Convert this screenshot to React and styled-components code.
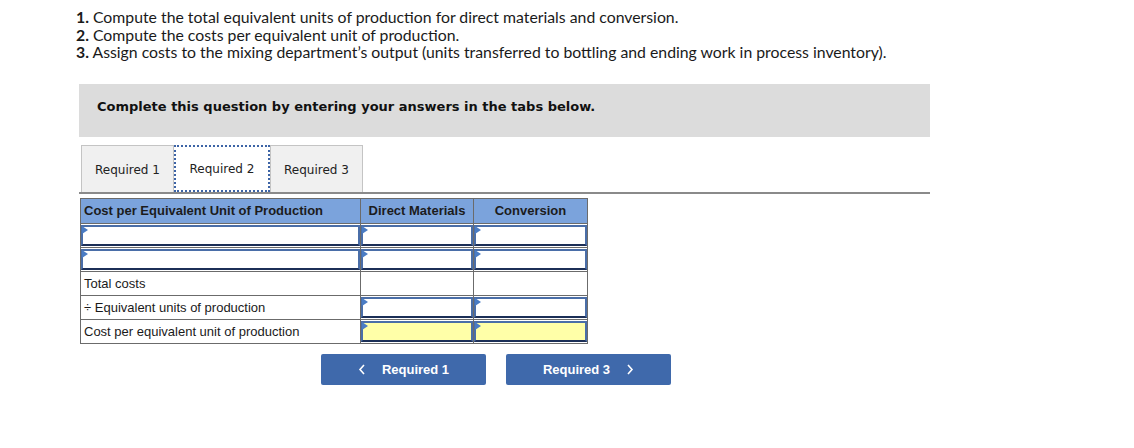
import React from "react";
import styled, { createGlobalStyle } from "styled-components";

const GlobalStyle = createGlobalStyle`
  body {
    margin: 0;
    background: #fff;
    color: #111;
    font-family: Lato, "Open Sans", sans-serif;
  }
`;

const Page = styled.div`
  padding: 8px 0 0 76px;
  width: 1134px;
  box-sizing: border-box;
`;

const Steps = styled.ol`
  list-style: none;
  margin: 0;
  padding: 0;
  font-family: Lato, sans-serif;
  font-size: 15.8px;
  line-height: 17.5px;
  color: #1a1a1a;

  b {
    font-weight: 700;
  }
`;

const Panel = styled.div`
  margin-left: 3px;
  width: 851px;
`;

const Banner = styled.div`
  margin-top: 23px;
  height: 53px;
  box-sizing: border-box;
  padding: 15px 18px 13px;
  background: #dcdcdc;
  font-family: "DejaVu Sans", Verdana, sans-serif;
  font-weight: 700;
  font-size: 13px;
  color: #111;
`;

const TabRow = styled.div`
  display: flex;
  margin-top: 8px;
  padding-left: 2px;
  border-bottom: 2px solid #8a8a8a;
`;

const Tab = styled.div`
  width: ${(p) => p.$w}px;
  height: 47px;
  box-sizing: border-box;
  display: flex;
  align-items: center;
  justify-content: center;
  padding-top: 2px;
  font-family: "DejaVu Sans", Verdana, sans-serif;
  font-size: 12px;
  color: #222;
  background: ${(p) => (p.$active ? "#fff" : "#f0f0f0")};
  border: ${(p) => (p.$active ? "2px dotted #3d64a6" : "1px solid #c4c4c4")};
  border-bottom: ${(p) => (p.$active ? "2px dotted #3d64a6" : "none")};
`;

const Table = styled.table`
  margin: 4px 0 0 1px;
  border-collapse: collapse;
  font-family: "Liberation Sans", Arial, sans-serif;
  font-size: 13px;
  color: #1a1a1a;
`;

const Head = styled.th`
  height: 25px;
  box-sizing: border-box;
  padding: 0 3px;
  background: #7ba3dc;
  border: 1px solid #6b6b6b;
  font-weight: 700;
  font-size: 13px;
  text-align: ${(p) => (p.$left ? "left" : "center")};
  width: ${(p) => p.$w}px;
  color: #1c1c1c;
`;

const Cell = styled.td`
  height: 24px;
  box-sizing: border-box;
  padding: 0 3px;
  border: 1px solid #6b6b6b;
  vertical-align: middle;
`;

const InputCell = styled.td`
  height: 24px;
  box-sizing: border-box;
  padding: 0;
  border: 1px solid #6b6b6b;
`;

const Field = styled.div`
  position: relative;
  height: 21px;
  box-sizing: border-box;
  border: 2px solid #4a6ea8;
  border-bottom-color: #1c2f57;
  background: ${(p) => (p.$yellow ? "#ffffa8" : "#fff")};

  &::before {
    content: "";
    position: absolute;
    left: -1px;
    top: -1px;
    border-top: 4px solid transparent;
    border-bottom: 4px solid transparent;
    border-left: 6px solid #4a7cc4;
  }
`;

const Buttons = styled.div`
  display: flex;
  gap: 20px;
  margin: 10px 0 0 242px;
`;

const NavButton = styled.button`
  width: 165px;
  height: 31px;
  border: none;
  border-radius: 2px;
  background: #3f69ab;
  color: #fff;
  font-family: "Liberation Sans", Arial, sans-serif;
  font-weight: 700;
  font-size: 13px;
  display: flex;
  align-items: center;
  justify-content: center;
  gap: 16px;
  padding: 0;
`;

const Chevron = styled.svg`
  width: 8px;
  height: 11px;
`;

const Left = () => (
  <Chevron viewBox="0 0 8 11">
    <path d="M6 1 L2 5.5 L6 10" fill="none" stroke="#fff" strokeWidth="1.6" />
  </Chevron>
);

const Right = () => (
  <Chevron viewBox="0 0 8 11">
    <path d="M2 1 L6 5.5 L2 10" fill="none" stroke="#fff" strokeWidth="1.6" />
  </Chevron>
);

const InputRow = () => (
  <tr>
    <InputCell><Field /></InputCell>
    <InputCell><Field /></InputCell>
    <InputCell><Field /></InputCell>
  </tr>
);

export default function App() {
  return (
    <Page>
      <GlobalStyle />
      <Steps>
        <li><b>1.</b> Compute the total equivalent units of production for direct materials and conversion.</li>
        <li><b>2.</b> Compute the costs per equivalent unit of production.</li>
        <li><b>3.</b> Assign costs to the mixing department’s output (units transferred to bottling and ending work in process inventory).</li>
      </Steps>
      <Panel>
        <Banner>Complete this question by entering your answers in the tabs below.</Banner>
        <TabRow>
          <Tab $w={93}>Required 1</Tab>
          <Tab $w={96} $active>Required 2</Tab>
          <Tab $w={93}>Required 3</Tab>
        </TabRow>
        <Table>
          <thead>
            <tr>
              <Head $left $w={280}>Cost per Equivalent Unit of Production</Head>
              <Head $w={113}>Direct Materials</Head>
              <Head $w={114}>Conversion</Head>
            </tr>
          </thead>
          <tbody>
            <InputRow />
            <InputRow />
            <tr>
              <Cell>Total costs</Cell>
              <Cell />
              <Cell />
            </tr>
            <tr>
              <Cell>÷ Equivalent units of production</Cell>
              <InputCell><Field /></InputCell>
              <InputCell><Field /></InputCell>
            </tr>
            <tr>
              <Cell>Cost per equivalent unit of production</Cell>
              <InputCell><Field $yellow /></InputCell>
              <InputCell><Field $yellow /></InputCell>
            </tr>
          </tbody>
        </Table>
        <Buttons>
          <NavButton><Left />Required 1</NavButton>
          <NavButton>Required 3<Right /></NavButton>
        </Buttons>
      </Panel>
    </Page>
  );
}
